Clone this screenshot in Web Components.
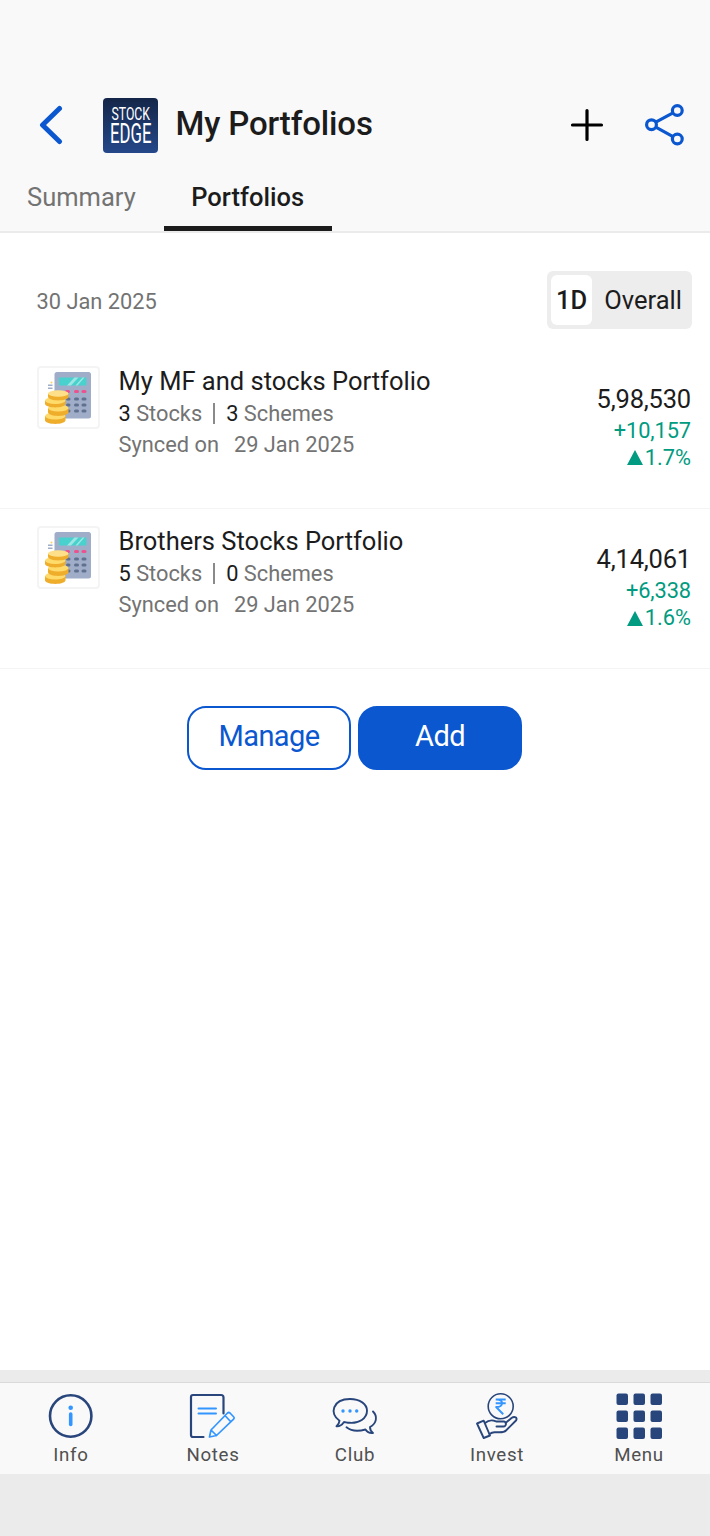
<!DOCTYPE html>
<html lang="en">
<head>
<meta charset="utf-8">
<meta name="viewport" content="width=device-width, initial-scale=1">
<title>My Portfolios</title>
<style>
    body {
        margin: 0;
        background: #fff;
        font-family: Roboto, "Liberation Sans", sans-serif;
        color: #1c1c1c;
    }
</style>
</head>
<body>
<portfolio-app></portfolio-app>

<script>
class StockLogo extends HTMLElement {
    constructor() {
        super();
        this.attachShadow({ mode: 'open' });
    }

    connectedCallback() {
        this.shadowRoot.innerHTML = `
            <style>
                :host { display: block; width: 55px; height: 55px; }
                svg { display: block; overflow: visible; }
                text { fill: #fff; font-family: Roboto, sans-serif; font-weight: 400; }
            </style>
            <svg width="55" height="55" viewBox="0 0 55 55">
                <defs>
                    <linearGradient id="bg" x1="0" y1="0" x2="0" y2="1">
                        <stop offset="0" stop-color="#142648"/>
                        <stop offset="1" stop-color="#25488a"/>
                    </linearGradient>
                </defs>
                <rect width="55" height="55" rx="4" fill="url(#bg)"/>
                <text x="8.5" y="21.8" font-size="18" textLength="38.5" lengthAdjust="spacingAndGlyphs">STOCK</text>
                <text x="7" y="45.3" font-size="27.5" textLength="41.5" lengthAdjust="spacingAndGlyphs">EDGE</text>
            </svg>
        `;
    }
}

class AppHeader extends HTMLElement {
    constructor() {
        super();
        this.attachShadow({ mode: 'open' });
    }

    connectedCallback() {
        this.shadowRoot.innerHTML = `
            <style>
                :host {
                    display: block;
                    box-sizing: border-box;
                    height: 233px;
                    padding-top: 88px;
                    background: #f9f9f9;
                    border-bottom: 2px solid #ebebeb;
                }
                .bar {
                    display: flex;
                    align-items: center;
                    height: 75px;
                    padding: 0 25.500px 0 37.500px;
                }
                .bar svg { display: block; flex: none; margin-bottom: 2px; }
                .bar .back { margin-right: 40px; margin-bottom: 1px; }
                h1 {
                    flex: 1;
                    margin: 0 0 4px 18px;
                    font-size: 33px;
                    line-height: 40px;
                    font-weight: 500;
                    letter-spacing: -0.15px;
                    white-space: nowrap;
                }
                .share { margin-left: 39.500px; }
            </style>
            <div class="bar">
                <svg class="back" width="25" height="40" viewBox="0 0 25 40" fill="none" stroke="#0b57d0" stroke-width="5" stroke-linecap="round" stroke-linejoin="round">
                    <path d="M21.500 3.500L4.500 20L21.500 36.500"/>
                </svg>
                <stock-logo></stock-logo>
                <h1><slot></slot></h1>
                <svg width="34" height="34" viewBox="0 0 34 34" stroke="#000" stroke-width="3.2" stroke-linecap="round">
                    <path d="M17 2.500V31.500M2.500 17H31.500"/>
                </svg>
                <svg class="share" width="41" height="44" viewBox="0 0 41 44" fill="none" stroke="#0b57d0" stroke-width="3.2">
                    <circle cx="7.500" cy="21.700" r="4.900"/>
                    <circle cx="33.300" cy="7.500" r="4.900"/>
                    <circle cx="33.300" cy="36" r="4.900"/>
                    <path d="M11.800 19.200L29 9.800M11.800 24.200L29 33.600"/>
                </svg>
            </div>
            <slot name="tabs"></slot>
        `;
    }
}

class AppTabs extends HTMLElement {
    constructor() {
        super();
        this.attachShadow({ mode: 'open' });
    }

    connectedCallback() {
        this.shadowRoot.innerHTML = `
            <style>
                :host { display: flex; height: 68px; }
                ::slotted(span) {
                    box-sizing: border-box;
                    padding: 14px 28px 0 27px;
                    font-size: 25.5px;
                    line-height: 40px;
                    color: #737373;
                }
                ::slotted(span.active) {
                    padding-left: 27.5px;
                    font-weight: 500;
                    color: #1c1c1c;
                    border-bottom: 5px solid #1c1c1c;
                }
            </style>
            <slot></slot>
        `;
    }
}

class RangeToggle extends HTMLElement {
    constructor() {
        super();
        this.attachShadow({ mode: 'open' });
    }

    connectedCallback() {
        this.shadowRoot.innerHTML = `
            <style>
                :host {
                    display: flex;
                    box-sizing: border-box;
                    width: 145px;
                    height: 58px;
                    padding: 4px;
                    border-radius: 6px;
                    background: #ededed;
                    font-size: 25.5px;
                    line-height: 50px;
                }
                b {
                    width: 41px;
                    border-radius: 6px;
                    background: #fff;
                    font-weight: 500;
                    text-align: center;
                }
                span { flex: 1; text-align: right; padding-right: 6px; }
            </style>
            <b>1D</b><span>Overall</span>
        `;
    }
}

class PortfolioRow extends HTMLElement {
    constructor() {
        super();
        this.attachShadow({ mode: 'open' });
    }

    connectedCallback() {
        const get = (name) => this.getAttribute(name) || '';

        this.shadowRoot.innerHTML = `
            <style>
                :host {
                    display: flex;
                    box-sizing: border-box;
                    height: 160.5px;
                    padding: 17.500px 19px 0 36.500px;
                    border-bottom: 1.5px solid #f4f4f4;
                    font-size: 21.800px;
                    line-height: 31px;
                    color: #737373;
                }
                .thumb {
                    box-sizing: border-box;
                    width: 63px;
                    height: 63px;
                    border: 2px solid #f4f4f4;
                    border-radius: 4px;
                }
                .thumb svg { display: block; }
                .info { flex: 1; margin-left: 19px; white-space: nowrap; }
                .name { font-size: 25.5px; line-height: 31px; color: #1c1c1c; }
                .counts { display: flex; align-items: center; margin-top: 1px; }
                .counts b, .value { font-weight: 400; color: #1c1c1c; }
                .counts i { width: 2px; height: 21px; margin: 0 11px; background: #8a8a8a; }
                .synced span { margin-left: 15px; }
                .figures { margin-top: 16px; text-align: right; color: #009b80; }
                .value { font-size: 25.5px; line-height: 35px; letter-spacing: -0.2px; }
                .gain { line-height: 28px; letter-spacing: -0.1px; }
                .percent { display: flex; justify-content: flex-end; align-items: center; line-height: 26px; }
                .percent svg { margin-right: 1.5px; }
            </style>
            <div class="thumb">
                <svg width="59" height="59" viewBox="0 0 59 59">
                    <rect x="15.5" y="4" width="36.5" height="46.5" rx="2.5" fill="#9fadc8"/>
                    <rect x="20" y="9.5" width="27.5" height="8" fill="#49d1ce"/>
                    <path d="M28 17.5l7.5-8h4l-7.5 8zM36.5 17.5l7-8h2l-7 8z" fill="#9ce7e4"/>
                    <g fill="#ec528e">
                        <rect x="26" y="22" width="5" height="3" rx="1.5"/><rect x="35" y="22" width="5" height="3" rx="1.5"/><rect x="42.5" y="22" width="5" height="3" rx="1.5"/>
                    </g>
                    <g fill="#60708f">
                        <rect x="27" y="29.5" width="4.5" height="3" rx="1.5"/><rect x="35" y="29.5" width="5" height="3" rx="1.5"/><rect x="42.5" y="29.5" width="5" height="3" rx="1.5"/>
                        <rect x="27" y="35.5" width="4.5" height="3" rx="1.5"/><rect x="35" y="35.5" width="5" height="3" rx="1.5"/><rect x="42.5" y="35.5" width="5" height="3" rx="1.5"/>
                        <rect x="27" y="41.5" width="4.5" height="3" rx="1.5"/><rect x="35" y="41.5" width="5" height="3" rx="1.5"/><rect x="42.5" y="41.5" width="5" height="3" rx="1.5"/>
                    </g>
                    <path d="M9 17.3h4.5M9 20.3h4.5" stroke="#9fadc8" stroke-width="1.5"/>
                    <circle cx="12.5" cy="14.5" r="1" fill="#ffd35c"/>
                    <!-- coin stack, bottom coin first -->
                    <path d="M6 48v4.5c1 4.5 19.500 4.500 20.500 0V48z" fill="#efad2c"/>
                    <ellipse cx="16.250" cy="48" rx="10.250" ry="3.500" fill="#ffdb6c"/>
                    <path d="M9 40v4.500c1 4.500 19.500 4.500 20.500 0V40z" fill="#efad2c"/>
                    <ellipse cx="19.250" cy="40" rx="10.250" ry="3.500" fill="#ffdb6c"/>
                    <path d="M6 32.500v3.500c1 4.500 19.500 4.500 20.500 0V32.500z" fill="#efad2c"/>
                    <ellipse cx="16.250" cy="32.500" rx="10.250" ry="3.500" fill="#ffdb6c"/>
                    <path d="M9 25.500v3.500c1 4.500 19.500 4.500 20.500 0V25.500z" fill="#efad2c"/>
                    <ellipse cx="19.250" cy="25.500" rx="10.250" ry="3.300" fill="#ffe08a"/>
                </svg>
            </div>
            <div class="info">
                <div class="name">${get('name')}</div>
                <div class="counts"><span><b>${get('stocks')}</b> Stocks</span><i></i><span><b>${get('schemes')}</b> Schemes</span></div>
                <div class="synced">Synced on<span>${get('synced')}</span></div>
            </div>
            <div class="figures">
                <div class="value">${get('value')}</div>
                <div class="gain">${get('gain')}</div>
                <div class="percent"><svg width="16" height="15" viewBox="0 0 16 15"><path d="M8 0L16 15H0z" fill="#009b80"/></svg>${get('percent')}</div>
            </div>
        `;
    }
}

class ActionButton extends HTMLElement {
    constructor() {
        super();
        this.attachShadow({ mode: 'open' });
    }

    connectedCallback() {
        this.shadowRoot.innerHTML = `
            <style>
                :host { display: block; }
                button {
                    display: block;
                    box-sizing: border-box;
                    width: 164px;
                    height: 64px;
                    padding: 0 0 3px;
                    border: 2px solid #0b57d0;
                    border-radius: 19px;
                    background: #fff;
                    color: #0b57d0;
                    font: 400 29px Roboto, sans-serif;
                    letter-spacing: -0.6px;
                }
                :host([primary]) button { background: #0b57d0; color: #fff; }
            </style>
            <button><slot></slot></button>
        `;
    }
}

const navIcons = {
    info: `
        <circle cx="23.700" cy="24" r="20.700" stroke-width="2.600"/>
        <circle cx="23.700" cy="15.700" r="2.300" fill="#3395ff" stroke="none"/>
        <path d="M23.700 22V32.500" stroke="#3395ff" stroke-width="3.600"/>`,
    notes: `
        <path d="M14.500 45H4Q2 45 2 43V5Q2 3 4 3H32Q34.500 3 34.500 5.500V21.500" stroke-width="2.200"/>
        <g stroke="#3395ff" stroke-width="2">
            <path d="M9.500 16.500H27M9.500 21.500H27"/>
            <path d="M20.500 45L22 38L38.500 21Q39.700 20 41 21L44.800 25Q45.700 26 44.600 27.200L27.500 43.500L20.500 45ZM22 38L27.500 43.500M36 23.500L41.500 29.500" stroke-width="1.700"/>
        </g>`,
    club: `
        <path d="M8.500 28.700C-2 22 1.500 7 19 7C29 7 36 12 36 18.800C36 26.500 28 31.500 18.500 30.800C16 30.800 14.500 30 13 30C11 33 8 34.500 5.500 34.300C7.800 32.500 8.300 31 8.500 28.700"/>
        <path d="M42 19.500C47 24.500 45.500 31.500 39 35C39 37.500 40.500 40 42 41C39 41.300 36 40 34.500 37.500C27 39.500 19.500 38.500 15.500 35.300"/>
        <g fill="#3395ff" stroke="none"><circle cx="12" cy="19" r="1.700"/><circle cx="19" cy="19" r="1.700"/><circle cx="25.700" cy="19" r="1.700"/></g>`,
    invest: `
        <circle cx="27.700" cy="14.300" r="12.500" stroke-width="1.600"/>
        <path d="M22.700 7.500H32.700M22.700 11.300H32.700M23.200 7.500C31.200 7 30.700 15.300 23.200 15.100L30.200 22.300" stroke="#3395ff" stroke-width="2" stroke-linecap="butt"/>
        <path d="M4 31.500L10.700 28.700L17 43.500L10.700 46Z"/>
        <path d="M12 31C17 27 20.500 28.500 23.500 29.500H31C34.200 30 33.200 34.500 30.500 34.500H23.500M32.500 31L38.500 26C41.500 24 45 25.500 43 28.500L33 38.500C31.500 40 29.500 40.300 26.500 40.300H21.500C19 40.300 17.500 41.300 16.500 42"/>`,
    menu: [1.5, 18.5, 35.5].map((y) => [1.5, 18.5, 35.5].map((x) =>
        `<rect x="${x}" y="${y}" width="11.500" height="11.500" rx="2" fill="#29467c" stroke="none"/>`).join('')).join('')
};

class NavItem extends HTMLElement {
    constructor() {
        super();
        this.attachShadow({ mode: 'open' });
    }

    connectedCallback() {
        this.shadowRoot.innerHTML = `
            <style>
                :host {
                    display: flex;
                    flex: 1;
                    flex-direction: column;
                    align-items: center;
                    padding-top: 9px;
                    font-size: 18.700px;
                    line-height: 24px;
                    color: #505050;
                    letter-spacing: 0.700px;
                }
                svg { display: block; margin-bottom: 3px; }
            </style>
            <svg width="48" height="48" viewBox="0 0 48 48" fill="none" stroke="#29467c" stroke-width="1.900" stroke-linecap="round" stroke-linejoin="round">${navIcons[this.getAttribute('icon')]}</svg>
            <slot></slot>
        `;
    }
}

class BottomNav extends HTMLElement {
    constructor() {
        super();
        this.attachShadow({ mode: 'open' });
    }

    connectedCallback() {
        this.shadowRoot.innerHTML = `
            <style>
                :host {
                    display: block;
                    box-sizing: border-box;
                    height: 166px;
                    padding-top: 12px;
                    background: #ebebeb;
                }
                nav {
                    display: flex;
                    box-sizing: border-box;
                    height: 92px;
                    border-top: 1.5px solid #dadada;
                    background: #f9f9f9;
                }
            </style>
            <nav><slot></slot></nav>
        `;
    }
}

class PortfolioApp extends HTMLElement {
    constructor() {
        super();
        this.attachShadow({ mode: 'open' });
    }

    connectedCallback() {
        this.shadowRoot.innerHTML = `
            <style>
                :host { display: flex; flex-direction: column; height: 1536px; }
                main { flex: 1; }
                .filter {
                    display: flex;
                    align-items: center;
                    justify-content: space-between;
                    height: 58px;
                    padding: 38px 18px 19px 36.500px;
                    font-size: 21.800px;
                    color: #737373;
                }
                .filter span { padding-top: 2px; }
                range-toggle { color: #1c1c1c; }
                .actions { display: flex; justify-content: center; gap: 7px; margin: 36.500px 1px 0 0; }
            </style>
            <app-header>My Portfolios
                <app-tabs slot="tabs"><span>Summary</span><span class="active">Portfolios</span></app-tabs>
            </app-header>
            <main>
                <div class="filter"><span>30 Jan 2025</span><range-toggle></range-toggle></div>
                <portfolio-row name="My MF and stocks Portfolio" stocks="3" schemes="3" synced="29 Jan 2025" value="5,98,530" gain="+10,157" percent="1.7%"></portfolio-row>
                <portfolio-row name="Brothers Stocks Portfolio" stocks="5" schemes="0" synced="29 Jan 2025" value="4,14,061" gain="+6,338" percent="1.6%"></portfolio-row>
                <div class="actions">
                    <action-button>Manage</action-button>
                    <action-button primary>Add</action-button>
                </div>
            </main>
            <bottom-nav>
                <nav-item icon="info">Info</nav-item>
                <nav-item icon="notes">Notes</nav-item>
                <nav-item icon="club">Club</nav-item>
                <nav-item icon="invest">Invest</nav-item>
                <nav-item icon="menu">Menu</nav-item>
            </bottom-nav>
        `;
    }
}

customElements.define('stock-logo', StockLogo);
customElements.define('app-header', AppHeader);
customElements.define('app-tabs', AppTabs);
customElements.define('range-toggle', RangeToggle);
customElements.define('portfolio-row', PortfolioRow);
customElements.define('action-button', ActionButton);
customElements.define('nav-item', NavItem);
customElements.define('bottom-nav', BottomNav);
customElements.define('portfolio-app', PortfolioApp);
</script>
</body>
</html>
